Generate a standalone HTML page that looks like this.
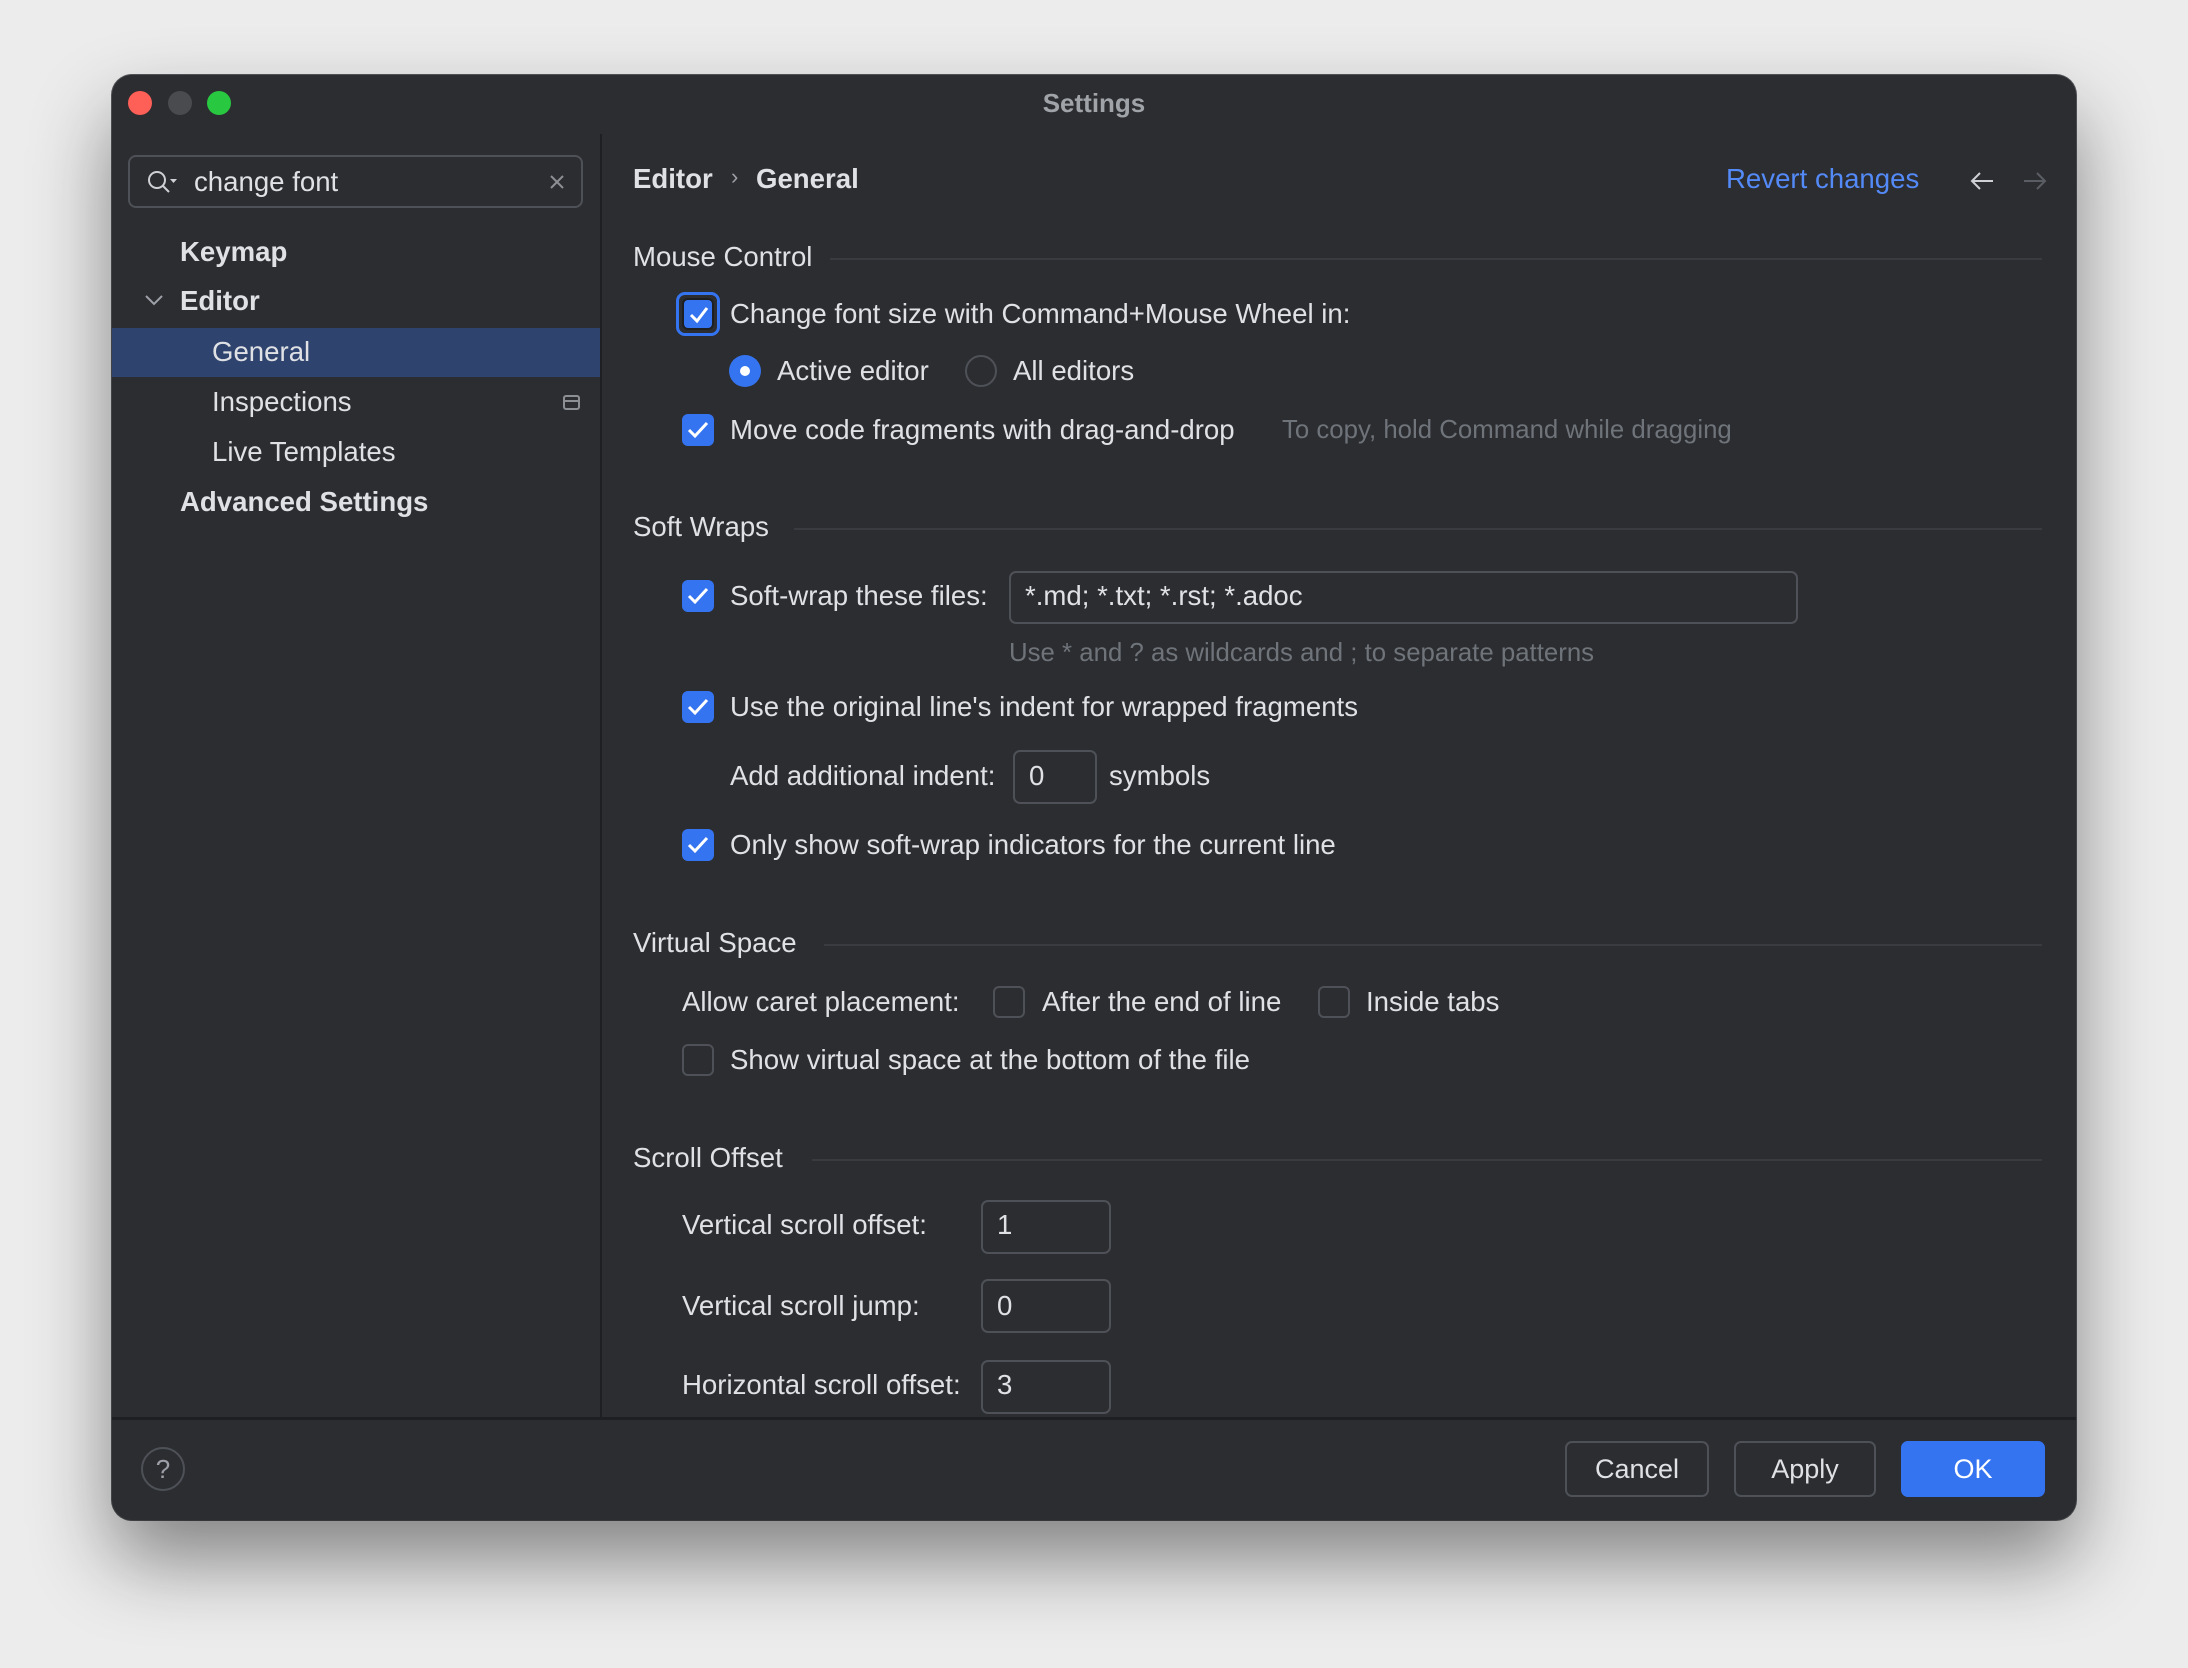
<!DOCTYPE html>
<html><head><meta charset="utf-8"><style>
*{margin:0;padding:0;box-sizing:border-box}
body{width:2188px;height:1668px;background:#ececec;font-family:"Liberation Sans",sans-serif;position:relative;overflow:hidden}
.win{position:absolute;left:112px;top:75px;width:1964px;height:1445px;background:#2b2d30;border-radius:20px;box-shadow:0 40px 80px rgba(0,0,0,.45),0 0 0 1px #55575c;overflow:hidden}
.t{position:absolute;line-height:36px;height:36px;font-size:26px;color:#dfe1e5;white-space:nowrap}
.c{font-size:27.6px}
.b{font-weight:bold}
.h{color:#6f737a;font-size:25.8px}
.dot{position:absolute;width:24px;height:24px;border-radius:50%;top:16px}
.cb{position:absolute;width:32px;height:32px;border-radius:6px;background:#3574f0}
.cb svg{position:absolute;left:5px;top:6px}
.ucb{position:absolute;width:32px;height:32px;border-radius:6px;border:2px solid #4e5157}
.inp{position:absolute;border:2px solid #4e5157;border-radius:7px}
.sec{position:absolute;height:2px;background:#393b40}
.btn{position:absolute;top:1366px;height:56px;border:2px solid #4e5157;border-radius:7px;font-size:27px;color:#dfe1e5;text-align:center;line-height:52px}
</style></head><body>
<div class="win">
<div class="dot" style="left:16px;background:#fe5f57"></div>
<div class="dot" style="left:56px;background:#4a4b4f"></div>
<div class="dot" style="left:95px;background:#28c840"></div>
<div class="t b" style="left:0;width:1964px;text-align:center;top:10px;color:#a0a3a8">Settings</div>

<div class="inp" style="left:16px;top:80px;width:455px;height:53px;border-radius:8px"></div>
<svg style="position:absolute;left:34px;top:94px" width="36" height="28" viewBox="0 0 36 28"><circle cx="11" cy="11" r="8" fill="none" stroke="#ced0d6" stroke-width="2"/><line x1="17" y1="17" x2="23" y2="23" stroke="#ced0d6" stroke-width="2"/><path d="M24 10h7l-3.5 4z" fill="#ced0d6"/></svg>
<div class="t c" style="left:82px;top:89px">change font</div>
<svg style="position:absolute;left:437px;top:99px" width="16" height="16"><path d="M2 2l12 12M14 2L2 14" stroke="#8c8f94" stroke-width="2"/></svg>
<div class="t b c" style="left:68px;top:159px">Keymap</div>
<svg style="position:absolute;left:32px;top:218px" width="20" height="14"><path d="M2 3l8 8 8-8" fill="none" stroke="#9da0a8" stroke-width="2"/></svg>
<div class="t b c" style="left:68px;top:208px">Editor</div>
<div style="position:absolute;left:0;top:253px;width:488px;height:49px;background:#2e436e"></div>
<div class="t c" style="left:100px;top:259px">General</div>
<div class="t c" style="left:100px;top:309px">Inspections</div>
<div style="position:absolute;left:451px;top:320px;width:17px;height:15px;border:2px solid #8c8f94;border-radius:3px"><div style="height:2px;background:#8c8f94;margin-top:3px"></div></div>
<div class="t c" style="left:100px;top:359px">Live Templates</div>
<div class="t b c" style="left:68px;top:409px">Advanced Settings</div>
<div style="position:absolute;left:488px;top:59px;width:2px;height:1283px;background:#1e1f22"></div>

<div class="t b c" style="left:521px;top:86px">Editor</div>
<div class="t" style="left:619px;top:84px;color:#9da0a8;font-size:22px">›</div>
<div class="t b c" style="left:644px;top:86px">General</div>
<div class="t c" style="left:1614px;top:86px;color:#548af7">Revert changes</div>
<svg style="position:absolute;left:1857px;top:95px" width="26" height="22"><path d="M24 11H3M11 3L3 11l8 8" fill="none" stroke="#ced0d6" stroke-width="2"/></svg>
<svg style="position:absolute;left:1910px;top:95px" width="26" height="22"><path d="M2 11h21M15 3l8 8-8 8" fill="none" stroke="#5a5d63" stroke-width="2"/></svg>

<div class="t c" style="left:521px;top:164px">Mouse Control</div>
<div class="sec" style="left:718px;top:183px;width:1212px"></div>
<div style="position:absolute;left:564px;top:217px;width:44px;height:44px;border:3px solid #3574f0;border-radius:9px"></div>
<div class="cb" style="left:570px;top:223px;border:2px solid #1e1f22"><svg width="20" height="18"><path d="M2 9l6 6L18 2" fill="none" stroke="#fff" stroke-width="3"/></svg></div>
<div class="t c" style="left:618px;top:221px">Change font size with Command+Mouse Wheel in:</div>
<div style="position:absolute;left:617px;top:280px;width:32px;height:32px;border-radius:50%;background:#3574f0"><div style="position:absolute;left:11px;top:11px;width:10px;height:10px;border-radius:50%;background:#fff"></div></div>
<div class="t c" style="left:665px;top:278px">Active editor</div>
<div style="position:absolute;left:853px;top:280px;width:32px;height:32px;border-radius:50%;border:2px solid #4e5157"></div>
<div class="t c" style="left:901px;top:278px">All editors</div>
<div class="cb" style="left:570px;top:339px"><svg width="22" height="20"><path d="M2 10l6 6L20 3" fill="none" stroke="#fff" stroke-width="3"/></svg></div>
<div class="t c" style="left:618px;top:337px">Move code fragments with drag-and-drop</div>
<div class="t h" style="left:1170px;top:337px">To copy, hold Command while dragging</div>

<div class="t c" style="left:521px;top:434px">Soft Wraps</div>
<div class="sec" style="left:682px;top:453px;width:1248px"></div>
<div class="cb" style="left:570px;top:505px"><svg width="22" height="20"><path d="M2 10l6 6L20 3" fill="none" stroke="#fff" stroke-width="3"/></svg></div>
<div class="t c" style="left:618px;top:503px">Soft-wrap these files:</div>
<div class="inp" style="left:897px;top:496px;width:789px;height:53px"></div>
<div class="t c" style="left:913px;top:503px">*.md; *.txt; *.rst; *.adoc</div>
<div class="t h" style="left:897px;top:560px">Use * and ? as wildcards and ; to separate patterns</div>
<div class="cb" style="left:570px;top:616px"><svg width="22" height="20"><path d="M2 10l6 6L20 3" fill="none" stroke="#fff" stroke-width="3"/></svg></div>
<div class="t c" style="left:618px;top:614px">Use the original line's indent for wrapped fragments</div>
<div class="t c" style="left:618px;top:683px">Add additional indent:</div>
<div class="inp" style="left:901px;top:675px;width:84px;height:54px"></div>
<div class="t c" style="left:917px;top:683px">0</div>
<div class="t c" style="left:997px;top:683px">symbols</div>
<div class="cb" style="left:570px;top:754px"><svg width="22" height="20"><path d="M2 10l6 6L20 3" fill="none" stroke="#fff" stroke-width="3"/></svg></div>
<div class="t c" style="left:618px;top:752px">Only show soft-wrap indicators for the current line</div>

<div class="t c" style="left:521px;top:850px">Virtual Space</div>
<div class="sec" style="left:712px;top:869px;width:1218px"></div>
<div class="t c" style="left:570px;top:909px">Allow caret placement:</div>
<div class="ucb" style="left:881px;top:911px"></div>
<div class="t c" style="left:930px;top:909px">After the end of line</div>
<div class="ucb" style="left:1206px;top:911px"></div>
<div class="t c" style="left:1254px;top:909px">Inside tabs</div>
<div class="ucb" style="left:570px;top:969px"></div>
<div class="t c" style="left:618px;top:967px">Show virtual space at the bottom of the file</div>

<div class="t c" style="left:521px;top:1065px">Scroll Offset</div>
<div class="sec" style="left:700px;top:1084px;width:1230px"></div>
<div class="t c" style="left:570px;top:1132px">Vertical scroll offset:</div>
<div class="inp" style="left:869px;top:1125px;width:130px;height:54px"></div>
<div class="t c" style="left:885px;top:1132px">1</div>
<div class="t c" style="left:570px;top:1213px">Vertical scroll jump:</div>
<div class="inp" style="left:869px;top:1204px;width:130px;height:54px"></div>
<div class="t c" style="left:885px;top:1213px">0</div>
<div class="t c" style="left:570px;top:1292px">Horizontal scroll offset:</div>
<div class="inp" style="left:869px;top:1285px;width:130px;height:54px"></div>
<div class="t c" style="left:885px;top:1292px">3</div>

<div style="position:absolute;left:0;top:1342px;width:1964px;height:3px;background:#1e1f22"></div>
<div style="position:absolute;left:29px;top:1372px;width:44px;height:44px;border-radius:50%;border:2px solid #4e5157;color:#9da0a8;font-size:26px;text-align:center;line-height:40px">?</div>
<div class="btn" style="left:1453px;width:144px">Cancel</div>
<div class="btn" style="left:1622px;width:142px">Apply</div>
<div class="btn" style="left:1789px;width:144px;background:#3574f0;border-color:#3574f0;color:#fff">OK</div>
</div>
</body></html>
